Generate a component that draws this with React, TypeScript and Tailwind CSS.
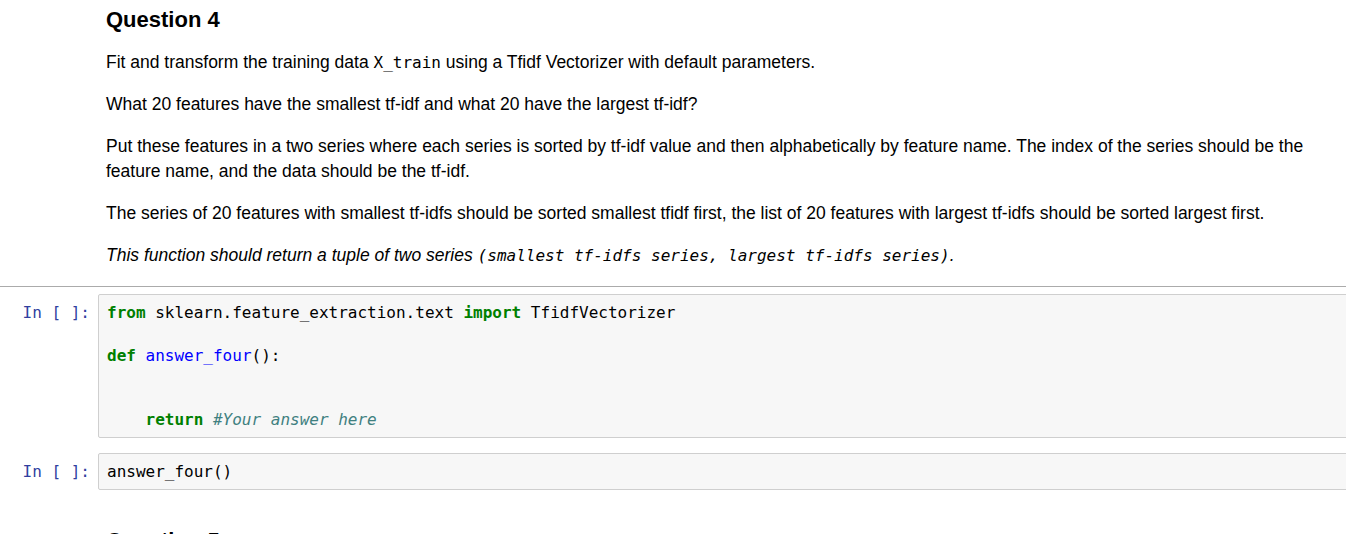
const sans = "font-['Liberation_Sans',Arial,sans-serif]"
const mono = "font-['DejaVu_Sans_Mono',monospace]"

const kw = "text-[#008000] font-bold"

function Prompt() {
  return (
    <div className={`w-[98px] shrink-0 pr-[8px] pt-[8px] text-right text-[16px] leading-[21.33px] text-[#303F9F] ${mono}`}>
      In&nbsp;[&nbsp;]:
    </div>
  )
}

function CodeCell({ children }: { children: React.ReactNode }) {
  return (
    <div className="flex">
      <Prompt />
      <div
        className={`flex-1 rounded-[2px] border border-[#cfcfcf] bg-[#f7f7f7] px-[8px] py-[7px] text-[16px] leading-[21.33px] text-black whitespace-pre ${mono}`}
      >
        {children}
      </div>
    </div>
  )
}

function Code({ children, italic }: { children: React.ReactNode; italic?: boolean }) {
  return <code className={`${mono} text-[16px] ${italic ? "italic" : ""}`}>{children}</code>
}

export default function App() {
  return (
    <div className={`w-full h-[534px] overflow-hidden bg-white text-black ${sans}`}>
      <div className="w-[1360px]">
        {/* Markdown cell */}
        <div className="pl-[106px] pr-[24px] pt-[7px]">
          <h2 className="text-[22px] leading-[26px] font-bold">Question 4</h2>
          <div className="mt-[17px] space-y-[17px] text-[17.5px] leading-[25px]">
            <p>
              Fit and transform the training data <Code>X_train</Code> using a Tfidf Vectorizer with default
              parameters.
            </p>
            <p>What 20 features have the smallest tf-idf and what 20 have the largest tf-idf?</p>
            <p>
              Put these features in a two series where each series is sorted by tf-idf value and then alphabetically
              by feature name. The index of the series should be the feature name, and the data should be the tf-idf.
            </p>
            <p>
              The series of 20 features with smallest tf-idfs should be sorted smallest tfidf first, the list of 20
              features with largest tf-idfs should be sorted largest first.
            </p>
            <p className="italic">
              This function should return a tuple of two series{" "}
              <Code italic>(smallest tf-idfs series, largest tf-idfs series)</Code>.
            </p>
          </div>
        </div>

        <div className="mt-[18px] border-b border-[#ababab]" />

        {/* Code cells */}
        <div className="mt-[7px] flex flex-col gap-[15px]">
          <CodeCell>
            <div>
              <span className={kw}>from</span> sklearn.feature_extraction.text <span className={kw}>import</span>{" "}
              TfidfVectorizer
            </div>
            <div> </div>
            <div>
              <span className={kw}>def</span> <span className="text-[#0000ff]">answer_four</span>():
            </div>
            <div> </div>
            <div> </div>
            <div>
              {"    "}
              <span className={kw}>return</span> <span className="italic text-[#408080]">#Your answer here</span>
            </div>
          </CodeCell>
          <CodeCell>
            <div>answer_four()</div>
          </CodeCell>
        </div>

        {/* Next markdown cell */}
        <div className="pl-[106px] pt-[38px]">
          <h2 className="text-[22px] leading-[26px] font-bold">Question 5</h2>
        </div>
      </div>
    </div>
  )
}
